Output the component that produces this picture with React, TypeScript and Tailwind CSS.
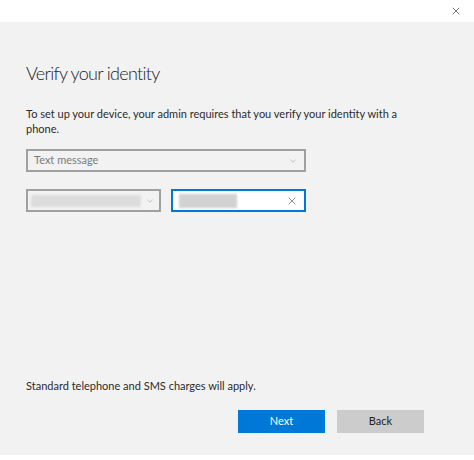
import { ChevronDown, X } from "lucide-react";

export default function App() {
	return (
		<div
			className="flex h-[460px] w-[474px] flex-col bg-white text-[#1f1f1f]"
			style={{ fontFamily: 'Lato, "Noto Sans", sans-serif' }}
		>
			<div className="flex h-[22px] shrink-0 items-center justify-end pr-[12px]">
				<X className="h-[12px] w-[12px] text-[#333]" strokeWidth={1.3} />
			</div>

			<div className="flex h-[433px] flex-col bg-[#f2f2f2] px-[26px]">
				<h1 className="mt-[38px] text-[18px] font-light leading-[26px] tracking-[-0.7px] text-[#222]">
					Verify your identity
				</h1>
				<p className="mt-[20px] max-w-[385px] text-[11px] leading-[15px] text-[#2b2b2b]">
					To set up your device, your admin requires that you verify your identity with a phone.
				</p>

				<div className="mt-[13px] flex h-[23px] w-[280px] items-center justify-between border-2 border-[#a0a0a0] bg-[#f2f2f2] pl-[6px] pr-[6px]">
					<span className="text-[11px] text-[#7a7a7a]">Text message</span>
					<ChevronDown className="h-[10px] w-[10px] text-[#9a9a9a]" strokeWidth={1.3} />
				</div>

				<div className="mt-[17px] flex gap-[10px]">
					<div className="flex h-[23px] w-[135px] items-center justify-between border-2 border-[#a0a0a0] bg-[#f2f2f2] pl-[3px] pr-[4px]">
						<div className="h-[12px] w-[110px] rounded-[2px] bg-[#dcdcdc] blur-[1px]" />
						<ChevronDown className="h-[10px] w-[10px] text-[#9a9a9a]" strokeWidth={1.3} />
					</div>
					<div className="flex h-[23px] w-[135px] items-center justify-between border-2 border-[#0078d7] bg-white pl-[6px] pr-[6px]">
						<div className="h-[14px] w-[58px] bg-[#d2d2d2] blur-[1px]" />
						<X className="h-[12px] w-[12px] text-[#555]" strokeWidth={1.3} />
					</div>
				</div>

				<p className="mt-auto text-[11px] leading-[15px] text-[#2b2b2b]">
					Standard telephone and SMS charges will apply.
				</p>

				<div className="mb-[22px] mt-[17px] flex justify-end gap-[12px] pr-[24px]">
					<button className="h-[23px] w-[87px] bg-[#0078d7] text-[11px] text-white">
						Next
					</button>
					<button className="h-[23px] w-[87px] bg-[#cccccc] text-[11px] text-[#222]">
						Back
					</button>
				</div>
			</div>
		</div>
	);
}
